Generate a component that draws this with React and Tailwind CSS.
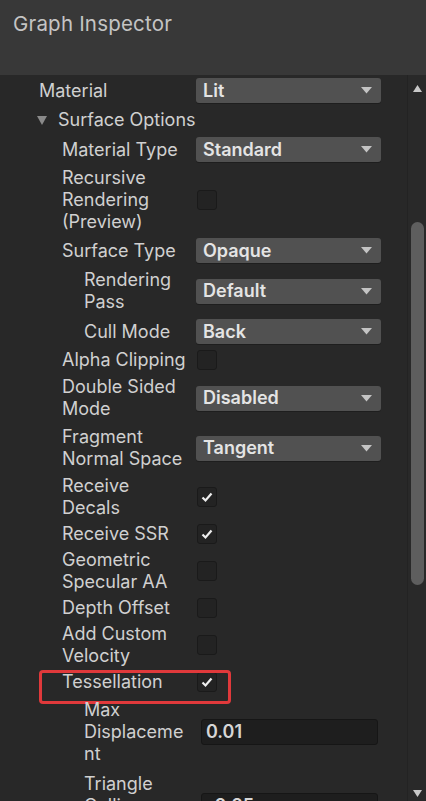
const font = { fontFamily: '"Inter", "Noto Sans", sans-serif' };

const rows = [
  { level: 0, label: ["Material"], type: "dropdown", value: "Lit" },
  { level: 0, label: ["Surface Options"], type: "foldout" },
  { level: 1, label: ["Material Type"], type: "dropdown", value: "Standard" },
  { level: 1, label: ["Recursive", "Rendering", "(Preview)"], type: "check", value: false },
  { level: 1, label: ["Surface Type"], type: "dropdown", value: "Opaque" },
  { level: 2, label: ["Rendering", "Pass"], type: "dropdown", value: "Default" },
  { level: 2, label: ["Cull Mode"], type: "dropdown", value: "Back" },
  { level: 1, label: ["Alpha Clipping"], type: "check", value: false },
  { level: 1, label: ["Double Sided", "Mode"], type: "dropdown", value: "Disabled" },
  { level: 1, label: ["Fragment", "Normal Space"], type: "dropdown", value: "Tangent" },
  { level: 1, label: ["Receive", "Decals"], type: "check", value: true },
  { level: 1, label: ["Receive SSR"], type: "check", value: true },
  { level: 1, label: ["Geometric", "Specular AA"], type: "check", value: false },
  { level: 1, label: ["Depth Offset"], type: "check", value: false },
  { level: 1, label: ["Add Custom", "Velocity"], type: "check", value: false },
  { level: 1, label: ["Tessellation"], type: "check", value: true, highlight: true },
  { level: 2, label: ["Max", "Displaceme", "nt"], type: "field", value: "0.01" },
  { level: 2, label: ["Triangle", "Culling", "Epsilon"], type: "field", value: "-0.25" },
];

const indent = { 0: "pl-[39px]", 1: "pl-[62px]", 2: "pl-[84px]" };

const rowPad = { dropdown: "py-[3px]", check: "py-[2px]", field: "py-[4px]" };

function Dropdown({ value }) {
  return (
    <div className="w-[185px] h-[25px] rounded-[3px] bg-[#515151] flex items-center justify-between pl-[7px] pr-[9px] shadow-[0_1px_0_#1e1e1e]">
      <span className="text-[18px] font-semibold text-[#e4e4e4] leading-none">{value}</span>
      <svg width="11" height="7" viewBox="0 0 11 7">
        <path d="M0 0 L11 0 L5.5 6.5 Z" fill="#c4c4c4" />
      </svg>
    </div>
  );
}

function Checkbox({ checked }) {
  return (
    <div className="ml-[1px] w-[20px] h-[20px] rounded-[3px] bg-[#232323] border border-[#1a1a1a] flex items-center justify-center">
      {checked && (
        <svg width="14" height="14" viewBox="0 0 14 14">
          <path d="M2.5 7.5 L5.5 10.5 L11.5 3.5" fill="none" stroke="#eeeeee" strokeWidth="2.2" />
        </svg>
      )}
    </div>
  );
}

function Field({ value }) {
  return (
    <div className="ml-[5px] w-[177px] h-[26px] rounded-[3px] bg-[#1e1e1e] border border-[#161616] flex items-center pl-[4px]">
      <span className="text-[18px] font-semibold text-[#d6d6d6] leading-none">{value}</span>
    </div>
  );
}

function Row({ row }) {
  if (row.type === "foldout") {
    return (
      <div className="flex items-center h-[28px] pl-[37px]">
        <svg width="10" height="9" viewBox="0 0 10 9" className="mr-[11px]">
          <path d="M0 0 L10 0 L5 9 Z" fill="#8a8a8a" />
        </svg>
        <span className="text-[18px] text-[#d0d0d0] leading-[22px]">{row.label[0]}</span>
      </div>
    );
  }
  return (
    <div className={`relative flex items-center ${rowPad[row.type]}`}>
      <div className={`w-[196px] shrink-0 ${indent[row.level]} text-[18px] leading-[22px] text-[#d0d0d0]`}>
        {row.label.map((line) => (
          <div key={line} className="whitespace-nowrap">{line}</div>
        ))}
      </div>
      <div className="flex items-center">
        {row.type === "dropdown" && <Dropdown value={row.value} />}
        {row.type === "check" && <Checkbox checked={row.value} />}
        {row.type === "field" && <Field value={row.value} />}
      </div>
      {row.highlight && (
        <span className="absolute left-[39px] top-[1px] w-[192px] h-[34px] rounded-[4px] border-[3px] border-[#e0393b]" />
      )}
    </div>
  );
}

export default function App() {
  return (
    <div className="w-[426px] h-[801px] overflow-hidden flex flex-col bg-[#282828]" style={font}>
      <div className="h-[75px] shrink-0 bg-[#383838] pl-[13px] pt-[10px]">
        <h1 className="text-[20.5px] text-[#c4c4c4] leading-[28px] tracking-[0.2px]">Graph Inspector</h1>
      </div>

      <div className="flex-1 flex min-h-0">
        <div className="flex-1 min-w-0 overflow-hidden">
          {rows.map((row) => (
            <Row key={row.label.join(" ")} row={row} />
          ))}
        </div>

        {/* scrollbar */}
        <div className="w-[19px] shrink-0 border-l border-[#232323] bg-[#292929] flex flex-col items-center">
          <svg width="9" height="7" viewBox="0 0 9 7" className="mt-[10px]">
            <path d="M0 7 L9 7 L4.5 0 Z" fill="#c8c8c8" />
          </svg>
          <div className="mt-[130px] w-[13px] h-[363px] rounded-full bg-[#5e5e5e]" />
          <div className="flex-1" />
          <svg width="9" height="7" viewBox="0 0 9 7" className="mb-[4px]">
            <path d="M0 0 L9 0 L4.5 7 Z" fill="#c8c8c8" />
          </svg>
        </div>
      </div>
    </div>
  );
}
